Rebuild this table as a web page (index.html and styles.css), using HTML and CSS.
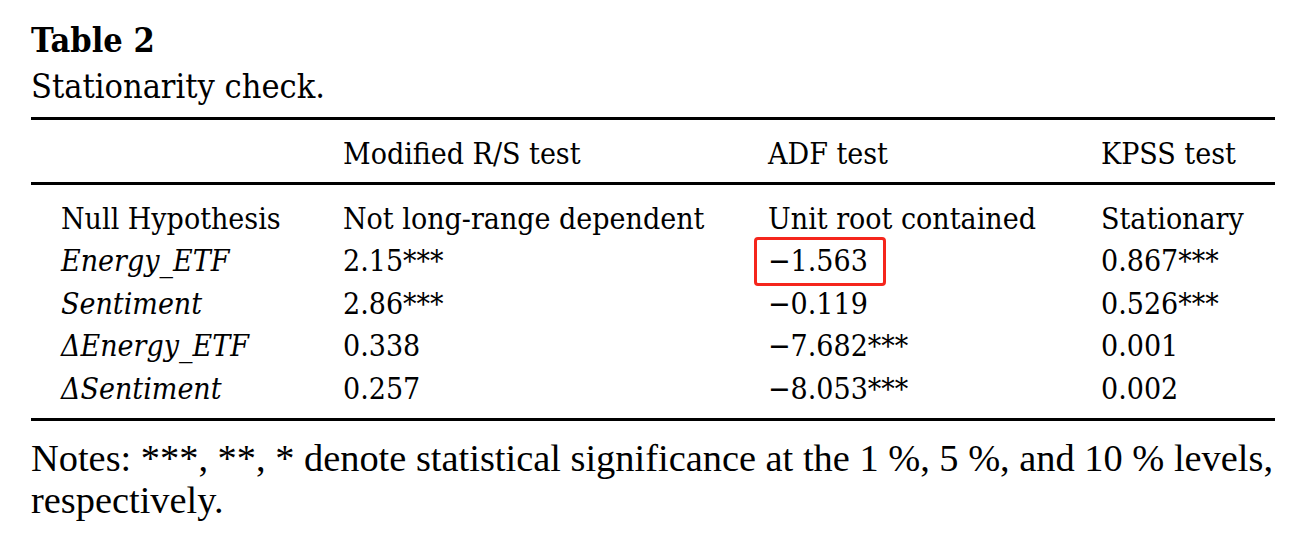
FILE: index.html
```html
<!DOCTYPE html>
<html lang="en">
<head>
<meta charset="utf-8">
<title>Table 2 – Stationarity check</title>
<link rel="stylesheet" href="styles.css">
</head>
<body>
<div class="figure">
  <div class="caption">
    <div class="label">Table 2</div>
    <div class="title">Stationarity check.</div>
  </div>
  <table class="data">
    <colgroup>
      <col class="c1"><col class="c2"><col class="c3"><col class="c4">
    </colgroup>
    <thead>
      <tr>
        <th></th>
        <th>Modified R/S test</th>
        <th>ADF test</th>
        <th>KPSS test</th>
      </tr>
    </thead>
    <tbody>
      <tr class="first">
        <td>Null Hypothesis</td>
        <td>Not long-range dependent</td>
        <td>Unit root contained</td>
        <td>Stationary</td>
      </tr>
      <tr>
        <td><i>Energy_ETF</i></td>
        <td>2.15***</td>
        <td><span class="marked">−1.563</span></td>
        <td>0.867***</td>
      </tr>
      <tr>
        <td><i>Sentiment</i></td>
        <td>2.86***</td>
        <td>−0.119</td>
        <td>0.526***</td>
      </tr>
      <tr>
        <td><i>ΔEnergy_ETF</i></td>
        <td>0.338</td>
        <td>−7.682***</td>
        <td>0.001</td>
      </tr>
      <tr class="last">
        <td><i>ΔSentiment</i></td>
        <td>0.257</td>
        <td>−8.053***</td>
        <td>0.002</td>
      </tr>
    </tbody>
  </table>
  <p class="notes">Notes: ***, **, * denote statistical significance at the 1 %, 5 %, and 10 % levels, respectively.</p>
</div>
</body>
</html>
```
FILE: styles.css
```css
html, body {
  margin: 0;
  padding: 0;
  background: #ffffff;
  color: #000000;
}

.figure {
  width: 1244px;
  padding: 17px 0 0 31px;
  font-family: "DejaVu Serif", "Liberation Serif", serif;
  font-stretch: condensed;
  font-size: 30px;
}

.caption {
  font-size: 34px;
  line-height: 46px;
  margin-bottom: 8px;
}

.label {
  font-weight: bold;
}

.data {
  width: 1244px;
  border-collapse: collapse;
  table-layout: fixed;
  border-top: 3px solid #000;
  border-bottom: 3px solid #000;
  line-height: 42.5px;
}

.c1 { width: 312px; }
.c2 { width: 425px; }
.c3 { width: 333px; }
.c4 { width: 174px; }

.data th,
.data td {
  padding: 0;
  text-align: left;
  vertical-align: top;
  white-space: nowrap;
}

.data th {
  font-weight: normal;
  padding-top: 13px;
  padding-bottom: 6px;
  border-bottom: 3px solid #000;
}

.data td:first-child {
  padding-left: 30px;
}

.data tr.first td {
  padding-top: 13px;
}

.data tr.last td {
  padding-bottom: 8px;
}

.marked {
  position: relative;
  display: inline-block;
}

.marked::after {
  content: "";
  position: absolute;
  left: -14px;
  right: -18px;
  top: -3px;
  bottom: -3px;
  border: 3.5px solid #f5261c;
  border-radius: 4px;
}

.notes {
  width: 1252px;
  margin: 16px 0 0 0;
  font-family: "Liberation Serif", "DejaVu Serif", serif;
  font-stretch: normal;
  font-size: 38.4px;
  line-height: 42px;
}
```
